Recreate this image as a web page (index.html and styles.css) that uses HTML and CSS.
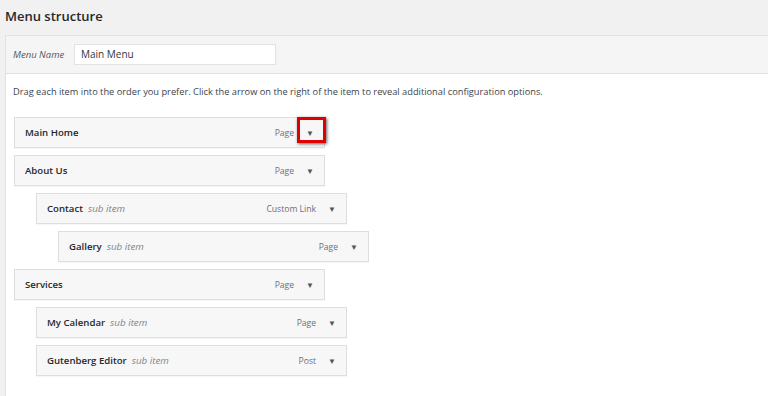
FILE: index.html
```html
<!DOCTYPE html>
<html>
<head>
<meta charset="utf-8">
<link rel="stylesheet" href="styles.css">
</head>
<body>
<div class="page">
  <h2 class="title">Menu structure</h2>
  <div class="panel">
    <div class="panel-head">
      <label class="name-label">Menu Name</label>
      <div class="name-input">Main Menu</div>
    </div>
    <div class="panel-body">
      <p class="desc">Drag each item into the order you prefer. Click the arrow on the right of the item to reveal additional configuration options.</p>
      <ul class="menu">
        <li class="item d0"><span class="t">Main Home</span><span class="type">Page</span><span class="arrow hl">&#9660;</span></li>
        <li class="item d0"><span class="t">About Us</span><span class="type">Page</span><span class="arrow">&#9660;</span></li>
        <li class="item d1"><span class="t">Contact</span><span class="sub">sub item</span><span class="type">Custom Link</span><span class="arrow">&#9660;</span></li>
        <li class="item d2"><span class="t">Gallery</span><span class="sub">sub item</span><span class="type">Page</span><span class="arrow">&#9660;</span></li>
        <li class="item d0"><span class="t">Services</span><span class="type">Page</span><span class="arrow">&#9660;</span></li>
        <li class="item d1"><span class="t">My Calendar</span><span class="sub">sub item</span><span class="type">Page</span><span class="arrow">&#9660;</span></li>
        <li class="item d1"><span class="t">Gutenberg Editor</span><span class="sub">sub item</span><span class="type">Post</span><span class="arrow">&#9660;</span></li>
      </ul>
    </div>
  </div>
</div>
</body>
</html>
```
FILE: styles.css
```css
html, body {
  margin: 0;
  padding: 0;
  background: #f1f1f1;
  font-family: "Open Sans", "Noto Sans", sans-serif;
  color: #23282d;
  overflow: hidden;
}
.page {
  box-sizing: border-box;
  padding-left: 5px;
  height: 396px;
  display: flex;
  flex-direction: column;
}
.title {
  margin: 0;
  height: 35px;
  line-height: 32px;
  font-size: 13px;
  font-weight: 600;
  color: #23282d;
}
.panel {
  flex: 1;
  border: 1px solid #e2e2e2;
  border-right: none;
  border-bottom: none;
  background: #fff;
  overflow: hidden;
}
.panel-head {
  display: flex;
  align-items: center;
  height: 37px;
  padding-left: 7px;
  background: #f5f5f5;
  border-bottom: 1px solid #e2e2e2;
}
.name-label {
  font-style: italic;
  font-size: 9.5px;
  color: #555;
  width: 61px;
}
.name-input {
  width: 194px;
  height: 19px;
  line-height: 19px;
  padding-left: 6px;
  background: #fff;
  border: 1px solid #e2e2e2;
  font-size: 10px;
  color: #32373c;
}
.panel-body {
  padding: 10px 0 0 7px;
}
.desc {
  margin: 0;
  font-size: 9.27px;
  line-height: 15px;
  color: #3c434a;
}
.menu {
  list-style: none;
  margin: 18px 0 0 1px;
  padding: 0;
  display: flex;
  flex-direction: column;
  gap: 7px;
}
.item {
  position: relative;
  box-sizing: border-box;
  width: 311px;
  height: 31px;
  display: flex;
  align-items: center;
  padding: 0 10px 0 10px;
  background: #f7f7f7;
  border: 1px solid #dedede;
  box-shadow: 0 1px 1px rgba(0,0,0,0.03);
}
.d1 { margin-left: 22px; }
.d2 { margin-left: 44px; }
.t {
  font-size: 9.6px;
  font-weight: 600;
  color: #23282d;
}
.sub {
  margin-left: 5px;
  font-size: 9.8px;
  font-style: italic;
  color: #828589;
}
.type {
  margin-left: auto;
  font-size: 8.6px;
  color: #6c7075;
}
.arrow {
  margin-left: 12px;
  font-size: 8px;
  color: #555;
}
.arrow.hl::after {
  content: "";
  position: absolute;
  right: -2px;
  top: -1px;
  width: 23px;
  height: 20px;
  border: 3px solid #e00000;
  box-shadow: 1px 1px 3px rgba(0,0,0,0.6);
}
```
